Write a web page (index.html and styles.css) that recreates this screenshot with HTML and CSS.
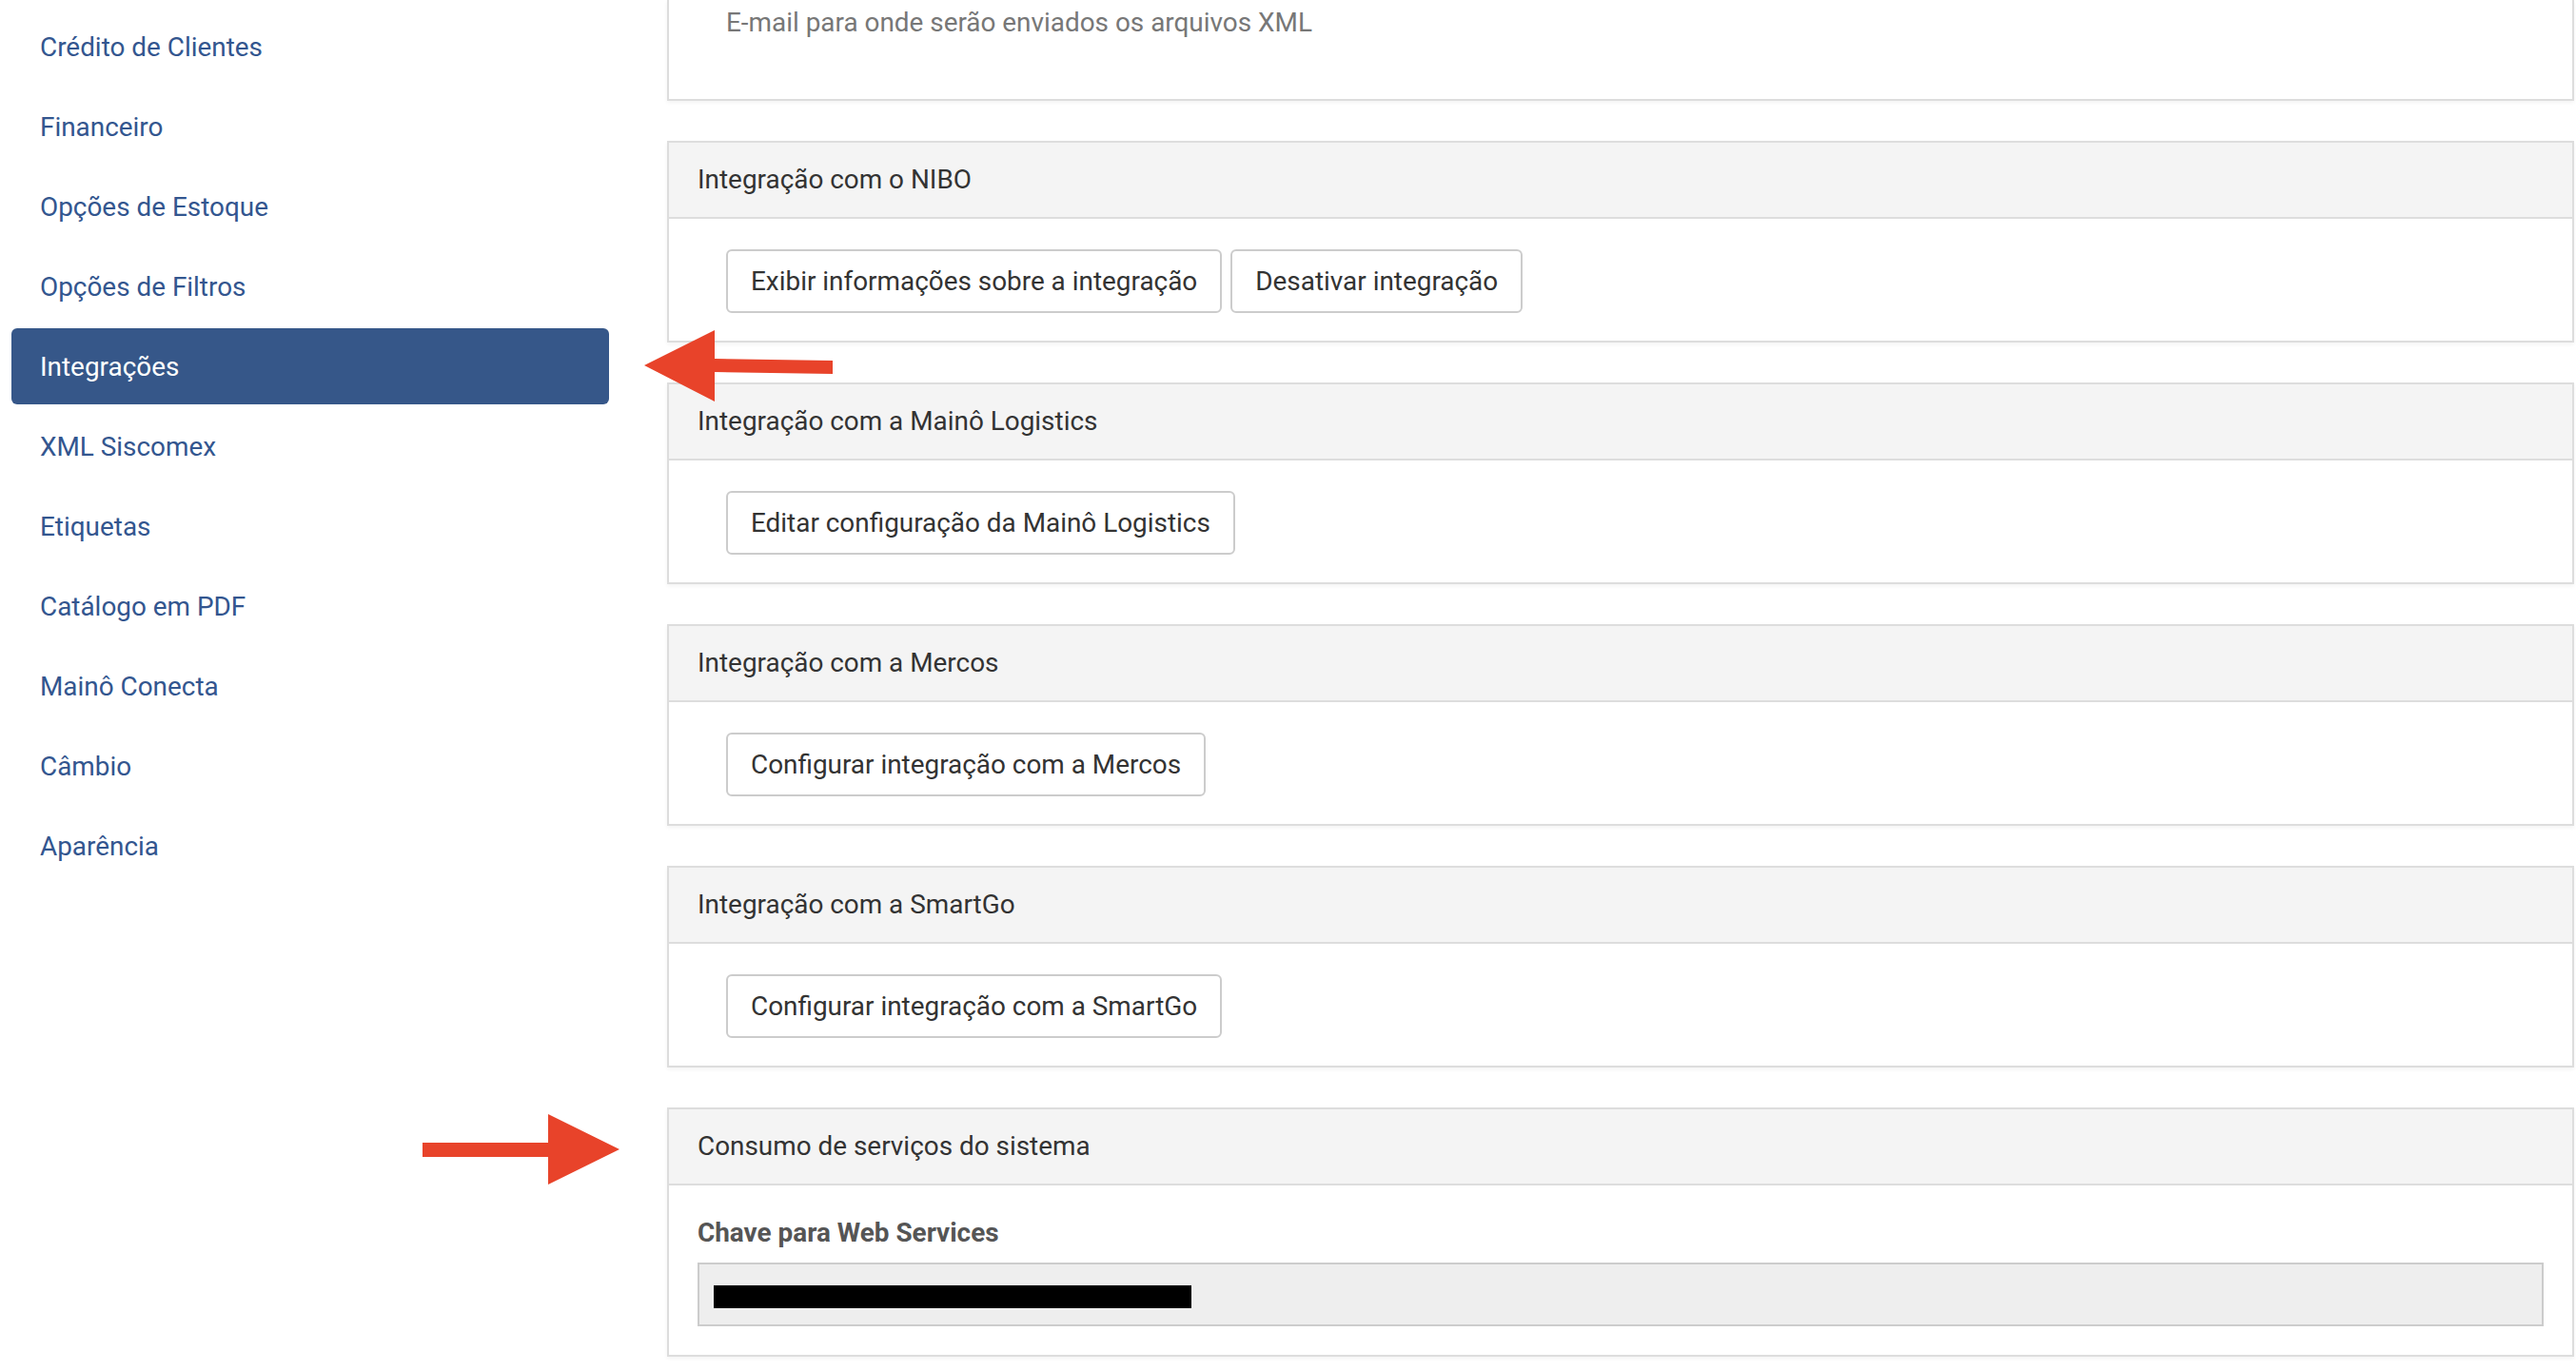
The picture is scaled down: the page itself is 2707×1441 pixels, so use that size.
FILE: index.html
```html
<!DOCTYPE html>
<html lang="pt-BR">
<head>
<meta charset="utf-8">
<title>Configurações - Integrações</title>
<link rel="stylesheet" href="styles.css">
</head>
<body>
<div class="page">
  <nav class="sidebar">
    <a class="nav-item" href="#">Crédito de Clientes</a>
    <a class="nav-item" href="#">Financeiro</a>
    <a class="nav-item" href="#">Opções de Estoque</a>
    <a class="nav-item" href="#">Opções de Filtros</a>
    <a class="nav-item active" href="#">Integrações</a>
    <a class="nav-item" href="#">XML Siscomex</a>
    <a class="nav-item" href="#">Etiquetas</a>
    <a class="nav-item" href="#">Catálogo em PDF</a>
    <a class="nav-item" href="#">Mainô Conecta</a>
    <a class="nav-item" href="#">Câmbio</a>
    <a class="nav-item" href="#">Aparência</a>
  </nav>

  <main class="content">
    <section class="panel panel-cut">
      <div class="panel-body panel-body-hint">
        <p class="hint">E-mail para onde serão enviados os arquivos XML</p>
      </div>
    </section>

    <section class="panel">
      <header class="panel-heading">Integração com o NIBO</header>
      <div class="panel-body">
        <div class="actions">
          <button class="btn" type="button">Exibir informações sobre a integração</button>
          <button class="btn" type="button">Desativar integração</button>
        </div>
      </div>
    </section>

    <section class="panel">
      <header class="panel-heading">Integração com a Mainô Logistics</header>
      <div class="panel-body">
        <div class="actions">
          <button class="btn" type="button">Editar configuração da Mainô Logistics</button>
        </div>
      </div>
    </section>

    <section class="panel">
      <header class="panel-heading">Integração com a Mercos</header>
      <div class="panel-body">
        <div class="actions">
          <button class="btn" type="button">Configurar integração com a Mercos</button>
        </div>
      </div>
    </section>

    <section class="panel">
      <header class="panel-heading">Integração com a SmartGo</header>
      <div class="panel-body">
        <div class="actions">
          <button class="btn" type="button">Configurar integração com a SmartGo</button>
        </div>
      </div>
    </section>

    <section class="panel">
      <header class="panel-heading">Consumo de serviços do sistema</header>
      <div class="panel-body panel-body-form">
        <label class="field-label">Chave para Web Services</label>
        <div class="field-readonly"><span class="redacted"></span></div>
      </div>
    </section>
  </main>

  <svg class="annotations" width="2707" height="1441" viewBox="0 0 2707 1441" aria-hidden="true">
    <polygon class="arrow" points="677,384 751,347 751,377 875,379 875,393 751,391 751,422"/>
    <polygon class="arrow" points="444,1201 576,1201 576,1171 651,1208 576,1245 576,1216 444,1216"/>
  </svg>
</div>
</body>
</html>
```

FILE: styles.css
```css
* {
  box-sizing: border-box;
}

html,
body {
  margin: 0;
  padding: 0;
  background: #ffffff;
  overflow: hidden;
}

body {
  font-family: Roboto, "Noto Sans", "Liberation Sans", sans-serif;
  font-size: 27.9px;
  color: #333333;
}

.page {
  position: relative;
  display: flex;
  width: 2707px;
  height: 1441px;
  padding-right: 2px;
}

/* Sidebar */
.sidebar {
  flex: none;
  width: 640px;
  padding: 9px 0 0 12px;
  display: flex;
  flex-direction: column;
  gap: 4px;
}

.nav-item {
  display: flex;
  align-items: center;
  height: 80px;
  padding-left: 30px;
  border-radius: 6px;
  color: #33568f;
  text-decoration: none;
}

.nav-item.active {
  background: #365789;
  color: #ffffff;
}

/* Content */
.content {
  flex: 1;
  min-width: 0;
  margin-left: 61px;
  display: flex;
  flex-direction: column;
  gap: 42px;
}

.panel {
  border: 2px solid #dddddd;
  background: #ffffff;
  box-shadow: 0 2px 4px rgba(0, 0, 0, 0.05);
}

.panel-cut {
  border-top: 0;
}

.panel-heading {
  height: 80px;
  line-height: 78px;
  padding: 0 30px;
  background: #f4f4f4;
  border-bottom: 2px solid #dddddd;
  color: #333333;
}

.panel-body {
  padding: 32px 30px 29px;
}

.panel-body-hint {
  padding: 4px 30px 60px 60px;
}

.hint {
  margin: 0;
  line-height: 40px;
  color: #777777;
}

.actions {
  display: flex;
  gap: 9px;
  padding-left: 30px;
}

.btn {
  height: 67px;
  padding: 0 24px;
  border: 2px solid #cccccc;
  border-radius: 6px;
  background: #ffffff;
  font: inherit;
  line-height: 63px;
  color: #333333;
  cursor: pointer;
}

.panel-body-form {
  padding: 30px 30px 30px;
}

.field-label {
  display: block;
  line-height: 40px;
  margin-bottom: 11px;
  font-weight: 700;
  color: #555555;
}

.field-readonly {
  display: flex;
  align-items: center;
  height: 67px;
  padding: 4px 15px 0;
  border: 2px solid #cccccc;
  background: #eeeeee;
}

.redacted {
  display: block;
  width: 502px;
  height: 24px;
  background: #000000;
}

/* Annotation arrows drawn over the screenshot */
.annotations {
  position: absolute;
  top: 0;
  left: 0;
  pointer-events: none;
}

.arrow {
  fill: #e8432a;
}
```
